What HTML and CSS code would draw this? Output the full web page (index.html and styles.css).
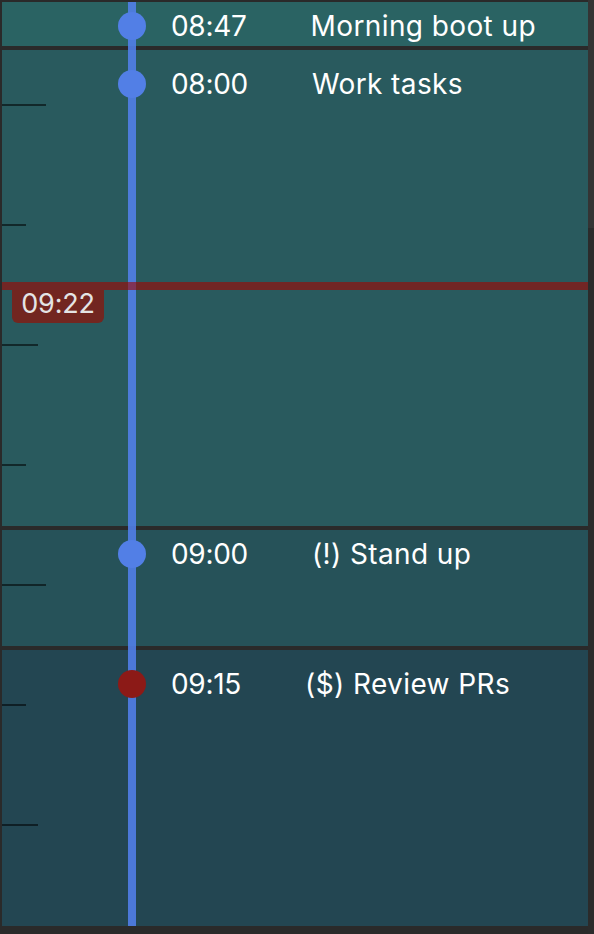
FILE: index.html
```html
<!DOCTYPE html>
<html lang="en">
<head>
<meta charset="utf-8">
<title>Day timeline</title>
<link rel="stylesheet" href="styles.css">
</head>
<body>
<div class="frame">
  <div class="day">
    <div class="blocks">
      <section class="block b1">
        <div class="event top-10"><span class="dot"></span><span class="time">08:47</span><span class="title">Morning boot up</span></div>
      </section>
      <section class="block b2">
        <div class="event top-20"><span class="dot"></span><span class="time">08:00</span><span class="title">Work tasks</span></div>
      </section>
      <section class="block b3">
        <div class="event top-10"><span class="dot"></span><span class="time">09:00</span><span class="title">(!) Stand up</span></div>
      </section>
      <section class="block b4">
        <div class="event top-20"><span class="dot dot-red"></span><span class="time">09:15</span><span class="title">($) Review PRs</span></div>
      </section>

      <div class="rail"></div>

      <div class="ticks">
        <span class="tick long t1"></span>
        <span class="tick short t2"></span>
        <span class="tick mid t3"></span>
        <span class="tick short t4"></span>
        <span class="tick long t5"></span>
        <span class="tick short t6"></span>
        <span class="tick mid t7"></span>
      </div>

      <div class="now">
        <div class="now-line"></div>
        <div class="now-label">09:22</div>
      </div>
    </div>
  </div>
  <div class="scrollbar"><div class="thumb"></div></div>
</div>
</body>
</html>
```
FILE: styles.css
```css
html, body {
  margin: 0;
  padding: 0;
  background: #2a2a2a;
}
body {
  font-family: "Inter", "Noto Sans", "Liberation Sans", sans-serif;
  color: #ffffff;
}
.frame {
  display: flex;
  width: 594px;
  height: 934px;
  overflow: hidden;
}
.day {
  flex: 1;
  padding: 2px 0 8px 2px;
}
.blocks {
  position: relative;
  display: flex;
  flex-direction: column;
  gap: 4px;
  height: 924px;
}
.block {
  flex: none;
}
.b1 { height: 44px; background: #2a6363; }
.b2 { height: 476px; background: #295a5e; }
.b3 { height: 116px; background: #265259; }
.b4 { height: 276px; background: #234652; }

.event {
  position: relative;
  z-index: 3;
  display: flex;
  align-items: center;
  height: 28px;
  padding-left: 116px;
  font-size: 28px;
  line-height: 28px;
}
.top-10 { padding-top: 10px; }
.top-20 { padding-top: 20px; }

.dot {
  flex: none;
  width: 28px;
  height: 28px;
  border-radius: 50%;
  background: #527fe6;
}
.dot-red { background: #8c1a17; }
.time {
  margin-left: 25px;
  margin-right: 64px;
  letter-spacing: -0.3px;
}
.title {
  white-space: nowrap;
  letter-spacing: 0.4px;
}

.rail {
  position: absolute;
  z-index: 1;
  left: 126px;
  top: 0;
  bottom: 0;
  width: 8px;
  background: rgba(82, 128, 235, 0.88);
}

.ticks .tick {
  position: absolute;
  left: 0;
  height: 2px;
  background: rgba(0, 0, 0, 0.55);
}
.tick.long { width: 44px; }
.tick.mid { width: 36px; }
.tick.short { width: 24px; }
.t1 { top: 102px; }
.t2 { top: 222px; }
.t3 { top: 342px; }
.t4 { top: 462px; }
.t5 { top: 582px; }
.t6 { top: 702px; }
.t7 { top: 822px; }

.now {
  position: absolute;
  z-index: 2;
  left: 0;
  right: 0;
  top: 280px;
}
.now-line {
  height: 8px;
  background: rgba(163, 3, 0, 0.6);
}
.now-label {
  display: inline-block;
  margin-left: 10px;
  width: 92px;
  height: 33px;
  line-height: 28px;
  text-align: center;
  font-size: 27px;
  letter-spacing: -0.2px;
  color: #e4e4e4;
  background: #722620;
  border-radius: 0 0 6px 6px;
}

.scrollbar {
  flex: none;
  width: 6px;
  background: #2b2b2b;
}
.thumb {
  height: 228px;
  background: #343434;
}
```
